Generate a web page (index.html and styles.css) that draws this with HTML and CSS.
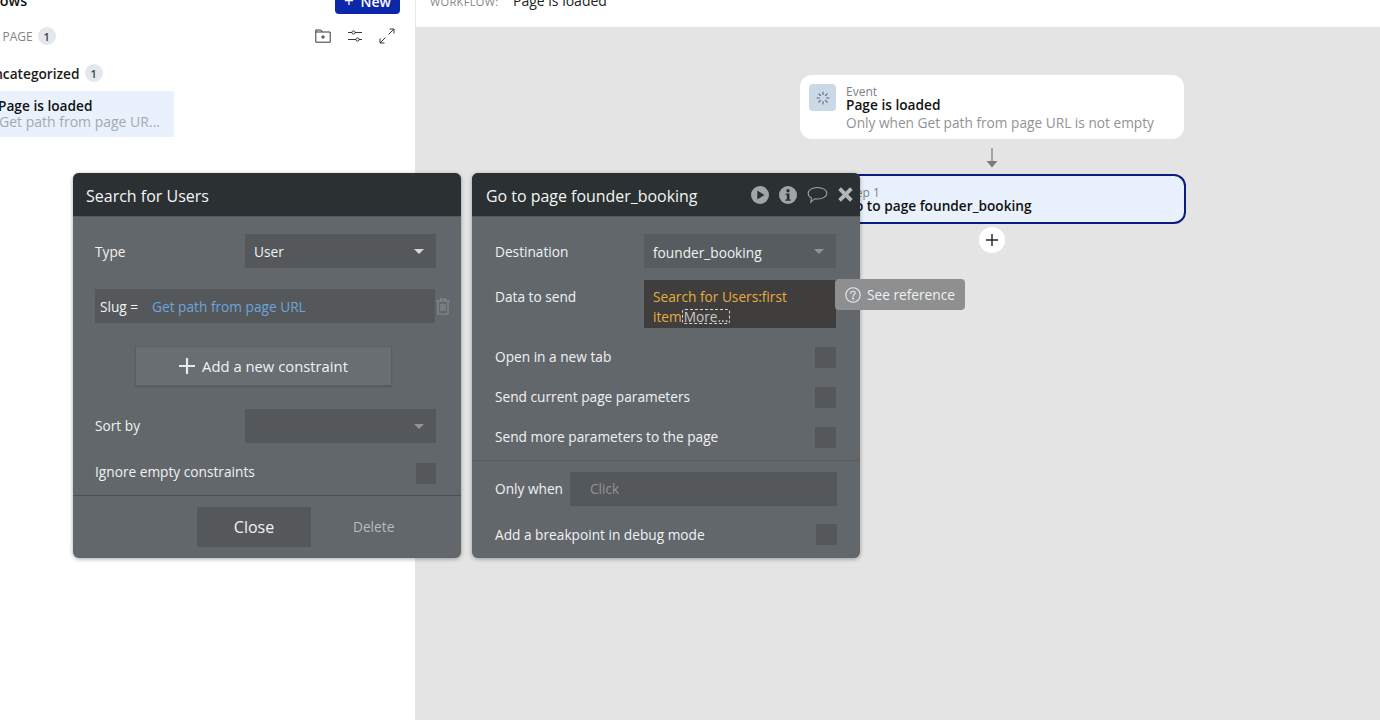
FILE: index.html
```html
<!DOCTYPE html>
<html lang="en">
<head>
<meta charset="utf-8">
<title>Workflow editor</title>
<link rel="stylesheet" href="styles.css">
</head>
<body>
<div class="app">
  <aside class="sidebar">
    <div class="side-head">
      <span class="side-title">Workflows</span>
      <button class="new-btn"><span class="new-plus">+</span> New</button>
    </div>
    <div class="side-tools">
      <span class="section-label">THIS PAGE</span>
      <span class="count count-a">1</span>
      <span class="tools">
        <svg class="tool" viewBox="0 0 16 16" width="16" height="16" fill="none" stroke="#33383c" stroke-width="1"><path d="M.8 14.200V2h5l1.400 2h8v10.200z"/><path d="M.8 4h6.400M8 7v4M6 9h4"/></svg>
        <svg class="tool" viewBox="0 0 16 16" width="16" height="16" fill="none" stroke="#33383c" stroke-width="1"><path d="M1 4.500h4M8 4.500h7M1 11.500h8M12 11.500h3"/><circle cx="6.500" cy="4.500" r="1.600"/><circle cx="10.500" cy="11.500" r="1.600"/></svg>
        <svg class="tool" viewBox="0 0 16 16" width="16" height="16" fill="none" stroke="#33383c" stroke-width="1"><path d="M9.500 6.500L15 1M10.500 1H15v4.500M6.500 9.500L1 15M1 10.500V15h4.500"/></svg>
      </span>
    </div>
    <div class="folder">
      <span class="folder-name">Uncategorized</span>
      <span class="count">1</span>
    </div>
    <div class="wf-item">
      <div class="wf-name">Page is loaded</div>
      <div class="wf-cond">Get path from page UR...</div>
    </div>
  </aside>

  <main class="main">
    <header class="topbar">
      <span class="top-label">WORKFLOW:</span>
      <span class="top-value">Page is loaded</span>
    </header>
    <div class="canvas">
      <div class="node node-event">
        <span class="node-icon">
          <svg viewBox="0 0 16 16" width="16" height="16" fill="none" stroke="#5f6b78" stroke-width="1.100" stroke-linecap="round"><path d="M8 2v2.400M8 11.600V14M2 8h2.400M11.600 8H14M3.800 3.800l1.700 1.700M10.500 10.500l1.700 1.700M3.800 12.200l1.700-1.700M10.500 5.500l1.700-1.700"/></svg>
        </span>
        <div class="node-text">
          <div class="node-kind">Event</div>
          <div class="node-name">Page is loaded</div>
          <div class="node-cond">Only when Get path from page URL is not empty</div>
        </div>
      </div>
      <svg class="arrow" viewBox="0 0 14 20" width="14" height="20" fill="#7b7b7b"><path d="M6.400 0h1.200v13H6.400z"/><path d="M1.600 13h10.800L7 19.500z"/></svg>
      <div class="node node-step">
        <div class="node-kind">Step 1</div>
        <div class="node-name">Go to page founder_booking</div>
      </div>
      <span class="add-step">
        <svg viewBox="0 0 12 12" width="12" height="12" stroke="#222" stroke-width="1.400"><path d="M6 0v12M0 6h12"/></svg>
      </span>
    </div>
  </main>

  <section class="palette palette-search">
    <h2 class="pal-head">Search for Users</h2>
    <div class="pal-body">
      <div class="row row-type">
        <span class="label">Type</span>
        <span class="select">User<i class="caret"></i></span>
      </div>
      <div class="constraint">
        <div class="constraint-box">
          <span class="c-key">Slug =</span>
          <span class="c-val">Get path from page URL</span>
        </div>
        <svg class="trash" viewBox="0 0 14 17" width="14" height="17" fill="none" stroke="#8a8e91" stroke-width="1.100"><path d="M0 3h14M4.500 3V1h5v2M2 3v13h10V3M5 6v7M7 6v7M9 6v7"/></svg>
      </div>
      <div class="add-wrap">
        <button class="add-constraint"><span class="add-plus"><svg viewBox="0 0 16 16" width="16" height="16" stroke="#e8e9ea" stroke-width="2.200"><path d="M8 0v16M0 8h16"/></svg></span>Add a new constraint</button>
      </div>
      <div class="row row-sort">
        <span class="label">Sort by</span>
        <span class="select"><i class="caret caret-dim"></i></span>
      </div>
      <div class="row row-ignore">
        <span class="label">Ignore empty constraints</span>
        <span class="check"></span>
      </div>
    </div>
    <div class="pal-foot">
      <button class="close-btn">Close</button>
      <span class="delete">Delete</span>
    </div>
  </section>

  <section class="palette palette-action">
    <div class="pal-head pal-head-icons">
      <h2 class="pal-title">Go to page founder_booking</h2>
      <span class="pal-icons">
        <svg viewBox="0 0 18 18" width="18" height="18"><circle cx="9" cy="9" r="9" fill="#a2a5a6"/><path d="M6.300 4.500l7.200 4.500-7.200 4.500z" fill="#2b3133"/></svg>
        <svg viewBox="0 0 18 18" width="18" height="18"><circle cx="9" cy="9" r="9" fill="#a2a5a6"/><circle cx="9" cy="4.700" r="1.700" fill="#2b3133"/><path d="M6.500 7.400h4v6h1.300v1.400H6.300v-1.400h1.500V8.800H6.500z" fill="#2b3133"/></svg>
        <svg viewBox="0 0 22 18" width="21" height="18" fill="none" stroke="#a2a5a6" stroke-width="1.100"><path d="M11 1.200c5.300 0 9.800 2.500 9.800 6s-4.500 6-9.800 6c-1 0-2-.1-2.900-.3L4 16.500l.7-4.400C2.500 11 1.200 9.300 1.200 7.200c0-3.500 4.500-6 9.800-6z"/></svg>
        <svg viewBox="0 0 14 14" width="15" height="15" stroke="#b3b5b6" stroke-width="3.600"><path d="M1.500 1.500l11 11M12.500 1.500l-11 11"/></svg>
      </span>
    </div>
    <div class="pal-body">
      <div class="row row-type">
        <span class="label">Destination</span>
        <span class="select select-b">founder_booking<i class="caret caret-dim"></i></span>
      </div>
      <div class="row row-data">
        <span class="label">Data to send</span>
        <div class="expr"><span class="expr-text">Search for Users:first item</span><span class="more">More...</span></div>
      </div>
      <div class="row row-check">
        <span class="label">Open in a new tab</span>
        <span class="check"></span>
      </div>
      <div class="row row-check">
        <span class="label">Send current page parameters</span>
        <span class="check"></span>
      </div>
      <div class="row row-check">
        <span class="label">Send more parameters to the page</span>
        <span class="check"></span>
      </div>
    </div>
    <div class="pal-lower">
      <div class="only-when">
        <span class="label">Only when</span>
        <span class="cond-input">Click</span>
      </div>
      <div class="row row-break">
        <span class="label">Add a breakpoint in debug mode</span>
        <span class="check"></span>
      </div>
    </div>
  </section>

  <div class="tooltip">
    <svg viewBox="0 0 16 16" width="16" height="16" fill="none" stroke="#eceded" stroke-width="1.100"><circle cx="8" cy="8" r="7.200"/><path d="M5.800 6.200C5.800 5 6.800 4.200 8 4.200s2.200.8 2.200 1.900C10.200 7.600 8 7.700 8 9.500" stroke-linecap="round"/><circle cx="8" cy="11.600" r=".5"/></svg>
    <span>See reference</span>
  </div>
</div>
</body>
</html>
```
FILE: styles.css
```css
* { box-sizing: border-box; }
html, body { margin: 0; height: 100%; }
body { font-family: "Open Sans", "Noto Sans", sans-serif; color: #111; background: #fff; overflow: hidden; }
h2 { margin: 0; font: inherit; }
button { font: inherit; border: 0; padding: 0; }

.app { position: relative; display: flex; width: 1380px; height: 720px; overflow: hidden; }

/* Sidebar */
.sidebar { width: 415px; flex: none; background: #fff; padding-right: 15px; overflow: hidden; }
.side-head { display: flex; justify-content: space-between; align-items: center; height: 28px; margin: -14px 0 0 -46px; }
.side-title { font-size: 14.3px; font-weight: 600; color: #111; }
.new-btn { width: 65px; height: 28px; background: #0c27a8; color: #fff; border-radius: 4px; font-size: 14px; font-weight: 600; }
.new-plus { font-size: 17px; font-weight: 400; margin-right: 3px; }
.side-tools { display: flex; align-items: center; height: 20px; margin: 12px 0 0 -26px; }
.section-label { font-size: 12px; color: #7f8488; }
.count { display: inline-flex; align-items: center; justify-content: center; width: 18px; height: 18px; border-radius: 50%; background: #e4e8ee; color: #444; font-size: 11px; font-weight: 600; margin-left: 5px; }
.tools { display: flex; gap: 16px; margin-left: auto; margin-right: 5px; }
.tool { display: block; }
.folder { display: flex; align-items: center; height: 20px; margin: 17px 0 0 -16px; }
.folder-name { font-size: 13.7px; font-weight: 600; color: #1c1c1c; }
.wf-item { width: 174px; height: 46px; margin-top: 8px; padding-top: 6px; background: #e8f1fc; white-space: nowrap; }
.wf-name { font-size: 13.7px; font-weight: 600; line-height: 17px; color: #111; margin-left: -2px; }
.wf-cond { font-size: 14px; line-height: 15px; color: #a5a9ad; margin-left: -1px; }

/* Main */
.main { flex: 1; display: flex; flex-direction: column; min-width: 0; }
.topbar { flex: none; display: flex; align-items: baseline; margin-top: -9px; height: 36px; padding-left: 14px; background: #fff; border-left: 1px solid #e8e8e8; }
.top-label { font-size: 11px; color: #7f8488; letter-spacing: .35px; width: 83px; }
.top-value { font-size: 14px; color: #222; }
.canvas { position: relative; flex: 1; background: #e4e4e4; }

/* Canvas nodes: free-placed by coordinates */
.node { position: absolute; border-radius: 12px; }
.node-event { left: 385px; top: 48px; width: 384px; height: 64px; background: #fff; display: flex; gap: 10px; padding: 9px; }
.node-icon { width: 27px; height: 27px; flex: none; background: #cbd8e6; border-radius: 4px; display: flex; align-items: center; justify-content: center; }
.node-text { margin-top: 1px; }
.node-kind { font-size: 12px; line-height: 13px; color: #7d8286; }
.node-name { font-size: 13.7px; font-weight: 600; line-height: 16px; color: #111; margin-top: -1px; }
.node-cond { font-size: 13.7px; line-height: 20px; color: #8f9397; }
.node-step { left: 385px; top: 147px; width: 386px; height: 50px; background: #e9f1fc; border: 2px solid #0b1c80; padding: 10px 0 0 43px; }
.arrow { position: absolute; left: 570px; top: 121px; }
.add-step { position: absolute; left: 564px; top: 200px; width: 26px; height: 26px; background: #fff; border-radius: 50%; display: flex; align-items: center; justify-content: center; }

/* Palettes: floating windows */
.palette { position: absolute; top: 173px; width: 388px; height: 385px; background: #62676b; color: #f1f2f2; border-radius: 6px; box-shadow: 0 1px 4px rgba(0,0,0,.35); overflow: hidden; font-size: 13.7px; }
.palette-search { left: 73px; }
.palette-action { left: 472px; }
.pal-head { display: flex; align-items: center; height: 44px; padding: 2px 13px 0; background: #2b3133; color: #f4f5f5; font-size: 16px; border-bottom: 1px solid #555a5d; }
.pal-title { font-size: 15.950px; }
.pal-head-icons { justify-content: space-between; padding: 2px 7px 0 14px; }
.pal-icons { display: flex; align-items: center; gap: 10px; margin-top: -2px; }
.pal-body { padding: 17px 24px 0 23px; }
.palette-search .pal-body { padding: 17px 25px 0 22px; }
.row { display: flex; align-items: center; justify-content: space-between; }
.row-type { height: 34px; }
.label { white-space: nowrap; }
.select { position: relative; width: 192px; height: 34px; background: #54585b; padding: 0 9px; line-height: 36px; }
.palette-search .select { width: 191px; }
.select-b { background: #575c60; line-height: 37px; }
.caret { position: absolute; right: 12px; top: 15px; border: 5.500px solid transparent; border-top: 5.500px solid #d6d7d8; border-bottom: 0; }
.caret-dim { border-top-color: #8f9396; }
.constraint { position: relative; margin-top: 21px; }
.constraint-box { display: flex; align-items: center; width: 340px; height: 34px; background: #54585b; padding-left: 5px; }
.c-key { width: 52px; }
.c-val { color: #6ea3dc; }
.trash { position: absolute; left: 341px; top: 9px; }
.add-wrap { margin: 23px 0 0 40px; }
.add-constraint { display: flex; align-items: center; justify-content: center; gap: 7px; width: 257px; height: 40px; background: #696e72; color: #f1f2f2; font-size: 14.8px; border: 1px solid #5a5f62; box-shadow: 0 1px 1px rgba(0,0,0,.12); }
.add-plus { display: flex; }
.row-sort { height: 34px; margin-top: 23px; }
.row-sort .label { margin-top: -1px; }
.row-ignore { height: 20px; margin-top: 20px; }
.row-ignore .label { margin-top: -3px; }
.check { width: 21px; height: 21px; flex: none; background: #54585b; }
.palette-search .check { width: 20px; }
.pal-foot { position: relative; margin-top: 12px; padding: 11px 0 0 124px; border-top: 1px solid #4d5154; display: flex; align-items: center; }
.close-btn { width: 114px; height: 40px; background: #54585b; color: #f1f2f2; font-size: 16px; }
.delete { margin: -2px 0 0 42px; color: #b9bbbd; }

.row-data { align-items: flex-start; margin-top: 12px; height: 48px; }
.row-data .label { margin-top: 7px; }
.expr { width: 192px; height: 48px; background: #3f3e3d; color: #e8ac3e; padding: 7px 40px 0 9px; line-height: 20px; overflow: hidden; }
.more { color: #c8c9ca; border: 1px dashed #d8d8d8; border-radius: 3px; padding: 0 1px; line-height: 13px; display: inline-block; }
.row-check { height: 21px; margin-top: 19px; }
.row-check .label { margin-top: -2px; }
.pal-lower { border-top: 1px solid #595d60; margin-top: 12px; padding: 11px 23px 0 23px; }
.only-when { display: flex; align-items: center; justify-content: space-between; height: 34px; }
.only-when .label { margin-top: -2px; }
.cond-input { width: 267px; height: 34px; background: #54585b; color: #909396; padding-left: 20px; line-height: 34px; }
.row-break { margin-top: 18px; height: 21px; }

/* Tooltip */
.tooltip { position: absolute; left: 835px; top: 279px; width: 130px; height: 31px; background: #8e8f90; color: #f1f1f1; border-radius: 4px; display: flex; align-items: center; gap: 6px; padding-left: 10px; font-size: 13.7px; }
.tooltip svg { flex: none; }
```
